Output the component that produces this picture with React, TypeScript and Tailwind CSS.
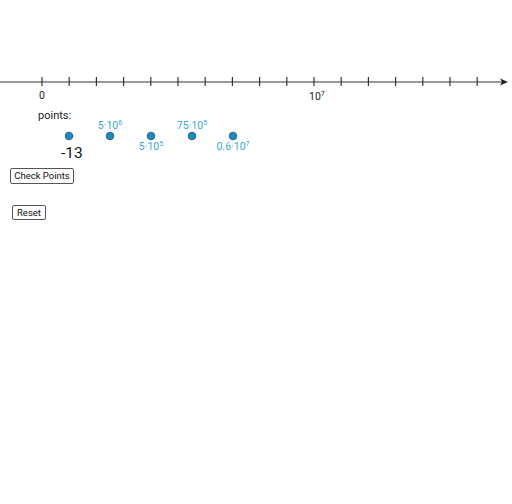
const TICKS = Array.from({ length: 17 }, (_, i) => 42 + i * 27.2);

const POINTS: { x: number; label: string; sup: string; pos: "above" | "below" | "none" }[] = [
  { x: 69, label: "", sup: "", pos: "none" },
  { x: 110, label: "5·10", sup: "6", pos: "above" },
  { x: 151, label: "5·10", sup: "5", pos: "below" },
  { x: 192, label: "75·10", sup: "5", pos: "above" },
  { x: 233, label: "0.6·10", sup: "7", pos: "below" },
];

function NumberLine() {
  return (
    <svg width="512" height="165" className="block" style={{ fontFamily: "Roboto, 'Liberation Sans', sans-serif" }}>
      <line x1="0" y1="82" x2="504" y2="82" stroke="#333" strokeWidth="1.2" />
      <path d="M500 78.5 L508 82 L500 85.5 L502 82 Z" fill="#222" />
      {TICKS.map((x) => (
        <line key={x} x1={x} y1="77" x2={x} y2="86" stroke="#333" strokeWidth="1.2" />
      ))}
      <text x="42" y="99" fontSize="10.5" textAnchor="middle" fill="#222">0</text>
      <text x="309" y="100" fontSize="10.5" fill="#222">
        10<tspan fontSize="7" dy="-4">7</tspan>
      </text>
      <text x="38" y="119" fontSize="11" fill="#222">points:</text>
      {POINTS.map((p) => (
        <g key={p.x}>
          <circle cx={p.x} cy="136" r="3.8" fill="#1d8bc0" stroke="#11587a" strokeWidth="0.8" />
          {p.pos !== "none" && (
            <text
              x={p.x}
              y={p.pos === "above" ? 129 : 150}
              fontSize="10.5"
              textAnchor="middle"
              fill="#3aa6d6"
            >
              {p.label}
              <tspan fontSize="7" dy="-4">{p.sup}</tspan>
            </text>
          )}
        </g>
      ))}
      <text x="61" y="158" fontSize="15.5" fill="#111">-13</text>
    </svg>
  );
}

export default function App() {
  return (
    <div className="w-[512px] h-[504px] bg-white overflow-hidden" style={{ fontFamily: "Roboto, 'Liberation Sans', sans-serif" }}>
      <NumberLine />
      <div className="flex flex-col items-start">
        <button className="ml-[10px] mt-[3px] w-[64px] h-[16px] border border-[#555] rounded-[2px] text-[9.5px] leading-none text-[#111] bg-white flex items-center justify-center">
          Check Points
        </button>
        <button className="ml-[12px] mt-[21px] w-[34px] h-[15px] border border-[#555] rounded-[2px] text-[9.5px] leading-none text-[#111] bg-white flex items-center justify-center">
          Reset
        </button>
      </div>
    </div>
  );
}
